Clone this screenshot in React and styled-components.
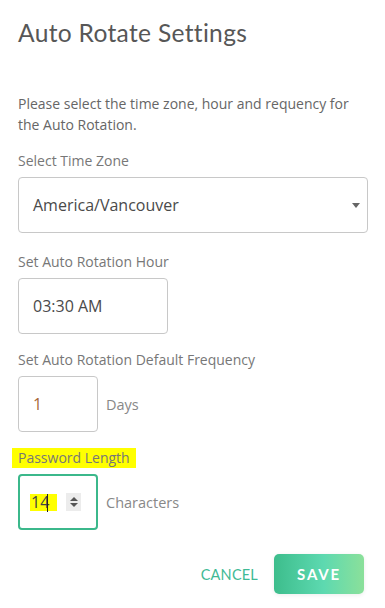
import React from 'react';
import styled, { createGlobalStyle } from 'styled-components';

const GlobalStyle = createGlobalStyle`
  html, body {
    margin: 0;
    padding: 0;
    background: #fff;
  }
  body {
    font-family: "Open Sans", "Liberation Sans", sans-serif;
  }
`;

const Panel = styled.div`
  width: 385px;
  height: 608px;
  box-sizing: border-box;
  padding: 17px 18px 0 18px;
  display: flex;
  flex-direction: column;
  overflow: hidden;
`;

const Title = styled.h2`
  margin: 0;
  font-family: Lato, "Open Sans", sans-serif;
  font-weight: 400;
  font-size: 24.6px;
  line-height: 32px;
  color: #575757;
  letter-spacing: 0.3px;
`;

const Intro = styled.p`
  margin: 44px 0 0 0;
  font-size: 14px;
  line-height: 21px;
  color: #666;
`;

const Field = styled.div`
  display: flex;
  flex-direction: column;
  margin-top: ${({ $top }) => $top}px;
`;

const Label = styled.label`
  align-self: flex-start;
  font-size: 14px;
  line-height: 20px;
  color: #777;
  margin-bottom: 6px;
  background: ${({ $mark }) => ($mark ? '#ffff00' : 'transparent')};
  padding: ${({ $mark }) => ($mark ? '0 6px 0 6px' : '0')};
  margin-left: ${({ $mark }) => ($mark ? '-6px' : '0')};
`;

const Row = styled.div`
  display: flex;
  align-items: center;
  gap: 8px;
`;

const Box = styled.div`
  box-sizing: border-box;
  width: ${({ $w }) => $w}px;
  height: 56px;
  border: ${({ $focus }) => ($focus ? '2px solid #3bb88b' : '1px solid #c8c8c8')};
  border-radius: 4px;
  display: flex;
  align-items: center;
  padding-left: ${({ $focus }) => ($focus ? 10 : 14)}px;
  padding-right: ${({ $select }) => ($select ? 7 : 12)}px;
  font-size: 16px;
  color: #4a4a4a;
`;

const Value = styled.span`
  flex: 1;
  color: ${({ $num }) => ($num ? '#a8683a' : '#4a4a4a')};
`;

const Caret = styled.span`
  width: 0;
  height: 0;
  border-left: 4.5px solid transparent;
  border-right: 4.5px solid transparent;
  border-top: 5px solid #666;
`;

const Marked = styled.span`
  background: #ffff00;
  color: #444;
  padding: 0 8px 0 1px;
  line-height: 17px;
  position: relative;
`;

const Cursor = styled.span`
  position: absolute;
  right: 9px;
  top: 0;
  width: 1px;
  height: 18px;
  background: #222;
`;

const Spinner = styled.span`
  margin-left: 9px;
  width: 15px;
  height: 18px;
  background: #ececec;
  display: flex;
  flex-direction: column;
  align-items: center;
  justify-content: center;
  gap: 2px;
`;

const Tri = styled.span`
  width: 0;
  height: 0;
  border-left: 4px solid transparent;
  border-right: 4px solid transparent;
  ${({ $up }) => ($up ? 'border-bottom: 4px solid #555;' : 'border-top: 4px solid #555;')}
`;

const Unit = styled.span`
  font-size: 14.5px;
  color: #888;
`;

const Actions = styled.div`
  margin-top: 24px;
  display: flex;
  justify-content: flex-end;
  align-items: center;
  gap: 16px;
  padding-right: 3px;
`;

const TextButton = styled.button`
  border: 0;
  background: transparent;
  font-family: Lato, "Open Sans", sans-serif;
  font-size: 14.5px;
  letter-spacing: 0.2px;
  color: #3fba95;
  padding: 0;
  cursor: pointer;
`;

const SaveButton = styled.button`
  border: 0;
  width: 90px;
  height: 40px;
  border-radius: 5px;
  background: linear-gradient(90deg, #3dbd8c 0%, #5dd9b0 55%, #8be09a 100%);
  box-shadow: 0 1px 4px rgba(0, 0, 0, 0.08);
  color: #fff;
  font-family: Lato, "Open Sans", sans-serif;
  font-weight: 700;
  font-size: 15px;
  letter-spacing: 1.8px;
  cursor: pointer;
`;

export default function App() {
  return (
    <>
      <GlobalStyle />
      <Panel>
        <Title>Auto Rotate Settings</Title>
        <Intro>
          Please select the time zone, hour and requency for the Auto Rotation.
        </Intro>

        <Field $top={16}>
          <Label>Select Time Zone</Label>
          <Box $w={350} $select>
            <Value>America/Vancouver</Value>
            <Caret />
          </Box>
        </Field>

        <Field $top={19}>
          <Label>Set Auto Rotation Hour</Label>
          <Box $w={150}>
            <Value>03:30 AM</Value>
          </Box>
        </Field>

        <Field $top={16}>
          <Label>Set Auto Rotation Default Frequency</Label>
          <Row>
            <Box $w={80}>
              <Value $num>1</Value>
            </Box>
            <Unit>Days</Unit>
          </Row>
        </Field>

        <Field $top={16}>
          <Label $mark>Password Length</Label>
          <Row>
            <Box $w={80} $focus>
              <Marked>
                14
                <Cursor />
              </Marked>
              <Spinner>
                <Tri $up />
                <Tri />
              </Spinner>
            </Box>
            <Unit>Characters</Unit>
          </Row>
        </Field>

        <Actions>
          <TextButton>CANCEL</TextButton>
          <SaveButton>SAVE</SaveButton>
        </Actions>
      </Panel>
    </>
  );
}
